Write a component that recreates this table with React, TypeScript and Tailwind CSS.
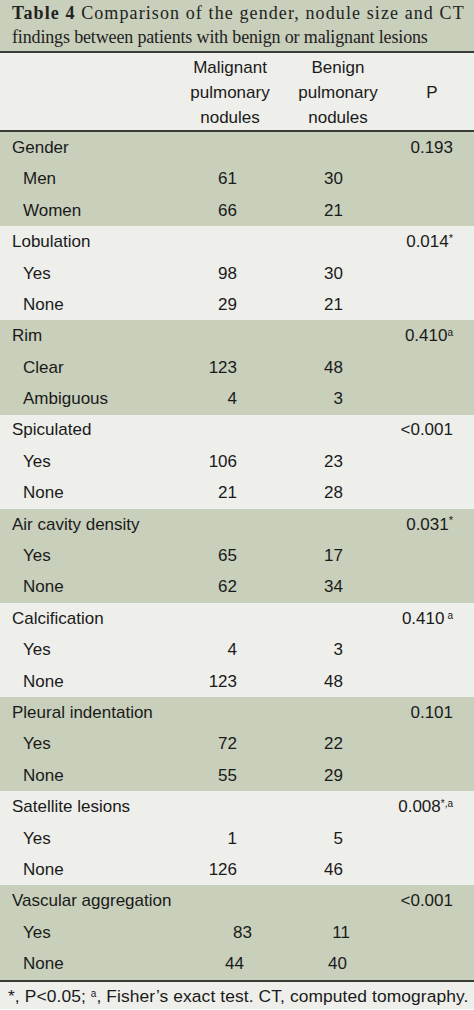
import React from "react";

type Row = { label: string; m?: string; b?: string; mCls?: string; bCls?: string };
type Group = { title: string; p: React.ReactNode; rows: Row[] };

const groups: Group[] = [
  { title: "Gender", p: "0.193", rows: [{ label: "Men", m: "61", b: "30" }, { label: "Women", m: "66", b: "21" }] },
  { title: "Lobulation", p: <>0.014<sup className="text-[11px]">*</sup></>, rows: [{ label: "Yes", m: "98", b: "30" }, { label: "None", m: "29", b: "21" }] },
  { title: "Rim", p: <>0.410<sup className="text-[10px]">a</sup></>, rows: [{ label: "Clear", m: "123", b: "48" }, { label: "Ambiguous", m: "4", b: "3" }] },
  { title: "Spiculated", p: "<0.001", rows: [{ label: "Yes", m: "106", b: "23" }, { label: "None", m: "21", b: "28" }] },
  { title: "Air cavity density", p: <>0.031<sup className="text-[11px]">*</sup></>, rows: [{ label: "Yes", m: "65", b: "17" }, { label: "None", m: "62", b: "34" }] },
  { title: "Calcification", p: <>0.410<sup className="ml-[3px] text-[10px]">a</sup></>, rows: [{ label: "Yes", m: "4", b: "3" }, { label: "None", m: "123", b: "48" }] },
  { title: "Pleural indentation", p: "0.101", rows: [{ label: "Yes", m: "72", b: "22" }, { label: "None", m: "55", b: "29" }] },
  { title: "Satellite lesions", p: <>0.008<sup className="text-[10px]">*,a</sup></>, rows: [{ label: "Yes", m: "1", b: "5" }, { label: "None", m: "126", b: "46" }] },
  {
    title: "Vascular aggregation",
    p: "<0.001",
    rows: [
      { label: "Yes", m: "83", b: "11", mCls: "-mr-[8px]", bCls: "-mr-[7px]" },
      { label: "None", m: "44", b: "40", mCls: "-mr-[3px]", bCls: "-mr-[4px]" },
    ],
  },
];

export default function App() {
  return (
    <div className="w-[474px] text-[#1a1a1a]" style={{ fontFamily: '"Liberation Sans", Arial, sans-serif' }}>
      <div
        className="bg-[#c8cfba] px-[12px] pt-[1px] pb-[2px] text-[18px] leading-[24px] whitespace-nowrap text-[#222]"
        style={{ fontFamily: '"Liberation Serif", "Times New Roman", serif' }}
      >
        <div className="tracking-[1.1px]">
          <span className="font-bold">Table 4</span> Comparison of the gender, nodule size and CT
        </div>
        <div className="tracking-[-0.15px]">findings between patients with benign or malignant lesions</div>
      </div>
      <div className="h-[2px] bg-[#3a3a3a]" />

      <div className="flex bg-[#eeeeea] pt-[2px] text-[17px] leading-[25px]">
        <div className="w-[180px]" />
        <div className="w-[100px] text-center">
          Malignant
          <br />
          pulmonary
          <br />
          nodules
        </div>
        <div className="w-[116px] text-center">
          Benign
          <br />
          pulmonary
          <br />
          nodules
        </div>
        <div className="flex w-[72px] items-center justify-center">P</div>
      </div>
      <div className="h-[2px] bg-[#3a3a3a]" />

      {groups.map((g, i) => (
        <div key={g.title} className={i % 2 === 0 ? "bg-[#c8cfba]" : "bg-[#eeeeea]"}>
          <div className="flex h-[31.4px] items-center text-[17px]">
            <div className="flex-1 pl-[12px]">{g.title}</div>
            <div className="w-[112px] pr-[21px] text-right">{g.p}</div>
          </div>
          {g.rows.map((r) => (
            <div key={r.label} className="flex h-[31.4px] items-center text-[17px]">
              <div className="flex-1 pl-[23px]">{r.label}</div>
              <div className={`w-[80px] text-right ${r.mCls ?? ""}`}>{r.m}</div>
              <div className={`w-[106px] text-right ${r.bCls ?? ""}`}>{r.b}</div>
              <div className="w-[131px]" />
            </div>
          ))}
        </div>
      ))}

      <div className="h-[2px] bg-[#3a3a3a]" />
      <div className="bg-[#eeeeea] px-[8px] pt-[1px] text-[17.4px] leading-[26px] tracking-[0.1px] whitespace-nowrap">
        *, P&lt;0.05; <sup className="text-[10px]">a</sup>, Fisher’s exact test. CT, computed tomography.
      </div>
    </div>
  );
}
